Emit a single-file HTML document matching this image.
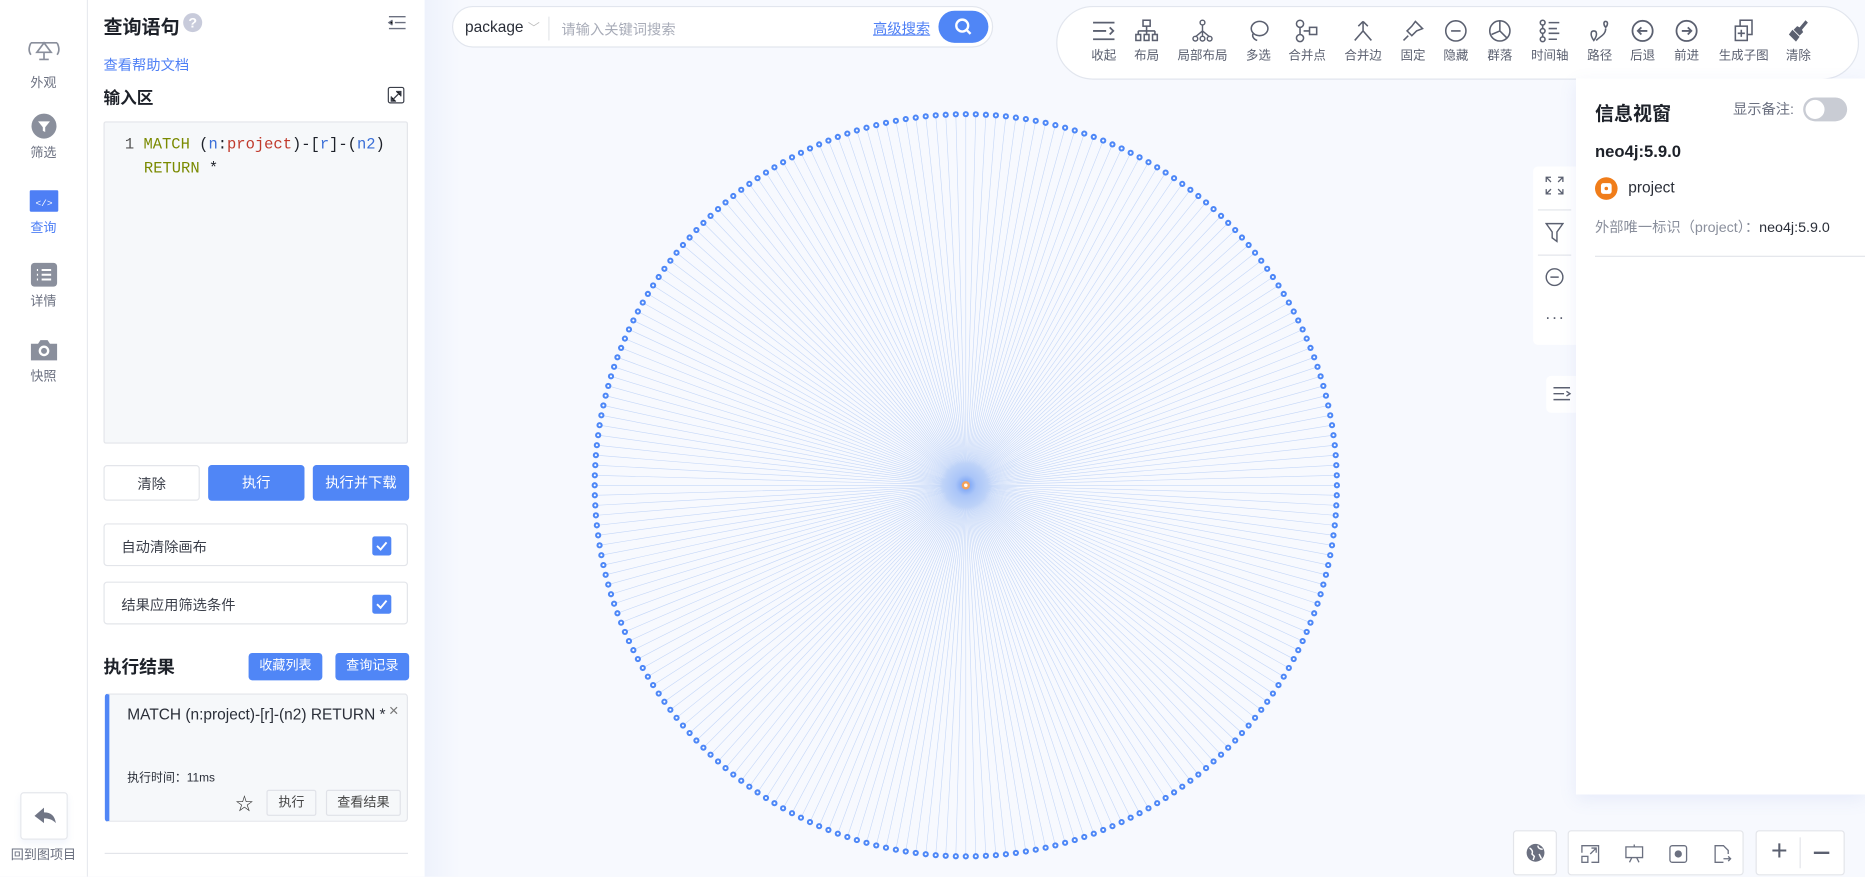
<!DOCTYPE html>
<html><head><meta charset="utf-8">
<style>
*{box-sizing:border-box;margin:0;padding:0}
body{width:1865px;height:876px;overflow:hidden;background:#f7f9fe;font-family:"Liberation Sans","Noto Sans CJK SC",sans-serif;color:#1d2129}
#w{position:absolute;left:0;top:0;width:1568px;height:737px;transform:scale(1.18941);transform-origin:0 0;background:#f7f9fe}
.a{position:absolute}
.nav{left:0;top:0;width:74px;height:737px;background:#fff;border-right:1px solid #e8eaef}
.ni{position:absolute;left:0;width:73px;text-align:center;font-size:11px;color:#6b7080}
.panel{left:74px;top:0;width:283px;height:737px;background:#fff}
.btn{position:absolute;border-radius:3px;font-size:12px;text-align:center;color:#fff;background:#5086f6}
.chk{position:absolute;left:87px;width:256px;height:36px;border:1px solid #e3e5ea;border-radius:3px;font-size:12px;color:#3b3f4a;padding:10px 0 0 14px}
.cb{position:absolute;right:13px;top:10px;width:16px;height:16px;background:#5086f6;border-radius:2px}
.tb{position:absolute;top:5px;left:888px;width:675px;height:62px;background:#fff;border:1px solid #e2e6ee;border-radius:31px}
.ti{position:absolute;top:10px;width:50px;margin-left:-25px;text-align:center;font-size:10.5px;color:#5b6070}
.ti svg{display:block;margin:0 auto 3px;width:20px;height:20px}
</style></head><body><div id="w">
<div class="a nav">
 <div class="ni" style="top:32px"><svg width="28" height="22" viewBox="0 0 28 22" fill="none" stroke="#8a8f9c" stroke-width="1.4"><path d="M3 4h22M14 4l-6 8h12zM14 12v6M10 18h8"/><path d="M3 4q-3 6 0 10M25 4q3 6 0 10"/></svg><div style="margin-top:4px">外观</div></div>
 <div class="ni" style="top:95px"><svg width="22" height="22"><circle cx="11" cy="11" r="10.5" fill="#8a8f9c"/><path d="M6 7h10l-4 5v4l-2-1v-3z" fill="#fff"/></svg><div style="margin-top:0px">筛选</div></div>
 <div class="ni" style="top:158px;color:#4e7ff5"><svg width="26" height="22"><rect x="1" y="2" width="24" height="18" rx="1" fill="#4e7ff5"/><text x="13" y="15" font-size="8" fill="#fff" text-anchor="middle" font-family="Liberation Mono">&lt;/&gt;</text></svg><div>查询</div></div>
 <div class="ni" style="top:220px"><svg width="24" height="22"><rect x="1" y="1" width="22" height="20" rx="3" fill="#8a8f9c"/><path d="M6 7h1M10 7h8M6 11h1M10 11h8M6 15h1M10 15h8" stroke="#fff" stroke-width="1.6"/></svg><div>详情</div></div>
 <div class="ni" style="top:283px"><svg width="26" height="22"><path d="M2 6h6l2-3h6l2 3h6v14H2z" fill="#8a8f9c"/><circle cx="13" cy="12" r="4.5" fill="#fff"/><circle cx="13" cy="12" r="2.5" fill="#8a8f9c"/></svg><div>快照</div></div>
 <div class="a" style="left:17px;top:666px;width:40px;height:40px;border:1px solid #e5e7ec;border-radius:3px;box-shadow:0 3px 6px rgba(80,110,200,.08)"><svg width="40" height="40"><path d="M11 19l8-7v4c6 0 9 3 10 9-3-3-6-4-10-4v4z" fill="#707585"/></svg></div>
 <div class="ni" style="top:710px;font-size:11px">回到图项目</div>
</div>
<div class="a panel">
 <div class="a" style="left:13px;top:9px;font-size:16px;font-weight:bold">查询语句</div>
 <div class="a" style="left:80px;top:11px;width:16px;height:16px;border-radius:50%;background:#c8cbdb;color:#fff;font-size:12px;text-align:center;line-height:16px;font-weight:bold">?</div>
 <svg class="a" style="left:252px;top:12px" width="16" height="14" stroke="#6b7080" stroke-width="1.2"><path d="M1 2h14M6 7h9M1 12h14M4 5l-3 2 3 2"/></svg>
 <div class="a" style="left:13px;top:46px;font-size:12px;color:#4e7ff5">查看帮助文档</div>
 <div class="a" style="left:13px;top:72px;font-size:14px;font-weight:bold">输入区</div>
 <div class="a" style="left:252px;top:73px;width:14px;height:14px;border:1.3px solid #3b3f4a;border-radius:2px"><svg width="12" height="12" stroke="#3b3f4a" stroke-width="1.1"><path d="M2 10l8-8M6 2h4v4M2 6v4h4"/></svg></div>
 <div class="a" style="left:13px;top:102px;width:256px;height:271px;background:#f6f8fa;border:1px solid #e3e5ea;border-radius:2px;font-family:'Liberation Mono',monospace;font-size:13px;line-height:20px;padding:9px 0 0 17px">
  <div><span style="color:#555">1</span> <span style="color:#7a8a00">MATCH</span> (<span style="color:#3a6fd8">n</span>:<span style="color:#c0392b">project</span>)-[<span style="color:#3a6fd8">r</span>]-(<span style="color:#3a6fd8">n2</span>)</div>
  <div style="padding-left:16px"><span style="color:#7a8a00">RETURN</span> *</div>
 </div>
</div>
<div class="btn" style="left:87px;top:391px;width:81px;height:30px;line-height:30px;background:#fff;color:#3b3f4a;border:1px solid #e3e5ea">清除</div>
<div class="btn" style="left:175px;top:391px;width:81px;height:30px;line-height:30px">执行</div>
<div class="btn" style="left:263px;top:391px;width:81px;height:30px;line-height:30px">执行并下载</div>
<div class="chk" style="top:440px">自动清除画布<div class="cb"><svg width="16" height="16"><path d="M4 8l3 3 5-6" stroke="#fff" stroke-width="1.6" fill="none"/></svg></div></div>
<div class="chk" style="top:489px">结果应用筛选条件<div class="cb"><svg width="16" height="16"><path d="M4 8l3 3 5-6" stroke="#fff" stroke-width="1.6" fill="none"/></svg></div></div>
<div class="a" style="left:87px;top:550px;font-size:15px;font-weight:bold">执行结果</div>
<div class="btn" style="left:209px;top:549px;width:62px;height:23px;line-height:23px;font-size:11px">收藏列表</div>
<div class="btn" style="left:282px;top:549px;width:62px;height:23px;line-height:23px;font-size:11px">查询记录</div>
<div class="a" style="left:88px;top:583px;width:255px;height:108px;background:#f6f8fa;border:1px solid #e3e5ea;border-left:4px solid #5086f6;border-radius:3px">
 <div class="a" style="left:15px;top:9px;font-size:13px;color:#2a2e38">MATCH (n:project)-[r]-(n2) RETURN *</div>
 <div class="a" style="left:235px;top:5px;font-size:14px;color:#777">×</div>
 <div class="a" style="left:15px;top:61px;font-size:10px;color:#2a2e38">执行时间：11ms</div>
 <div class="a" style="left:106px;top:81px;font-size:15px;color:#333">☆</div>
 <div class="a" style="left:132px;top:80px;width:42px;height:22px;border:1px solid #e0e2e8;border-radius:2px;font-size:11px;text-align:center;line-height:20px;color:#444">执行</div>
 <div class="a" style="left:182px;top:80px;width:63px;height:22px;border:1px solid #e0e2e8;border-radius:2px;font-size:11px;text-align:center;line-height:20px;color:#444">查看结果</div>
</div>
<div class="a" style="left:88px;top:717px;width:255px;height:1px;background:#e3e5ea"></div>
<div class="a" style="left:357px;top:0;width:30px;height:737px;background:linear-gradient(90deg,#eef2fc,#f7f9fe)"></div>

<svg id="g" class="a" style="left:357px;top:0" width="968" height="737"></svg>

<div class="a" style="left:380px;top:5px;width:455px;height:35px;background:#fff;border:1px solid #e2e6ee;border-radius:18px">
 <div class="a" style="left:10px;top:9px;font-size:13px;color:#2a2e38">package <span style="color:#bbb;font-size:10px">﹀</span></div>
 <div class="a" style="left:80px;top:8px;width:1px;height:20px;background:#e3e5ea"></div>
 <div class="a" style="left:91px;top:10px;font-size:12px;color:#a8acb8">请输入关键词搜索</div>
 <div class="a" style="left:353px;top:9px;font-size:12px;color:#4e7ff5;text-decoration:underline">高级搜索</div>
 <div class="a" style="left:408px;top:3px;width:42px;height:27px;background:#5086f6;border-radius:14px"><svg width="42" height="27" stroke="#fff" stroke-width="2" fill="none"><circle cx="20" cy="12.5" r="5"/><path d="M24 16.5l3 3"/></svg></div>
</div>

<div class="tb">
 <div class="ti" style="left:39px"><svg viewBox="0 0 20 20" stroke="#5b6070" fill="none" stroke-width="1.5"><path d="M1 3h18M1 10h11M1 17h18M15 7l3 3-3 3"/></svg>收起</div>
 <div class="ti" style="left:75px"><svg viewBox="0 0 20 20" stroke="#5b6070" fill="none" stroke-width="1.3"><rect x="7" y="1" width="6" height="5"/><path d="M10 6v4M3 10h14M3 10v3M10 10v3M17 10v3"/><rect x="1" y="13" width="4" height="5"/><rect x="8" y="13" width="4" height="5"/><rect x="15" y="13" width="4" height="5"/></svg>布局</div>
 <div class="ti" style="left:122px"><svg viewBox="0 0 20 20" stroke="#5b6070" fill="none" stroke-width="1.2"><circle cx="10" cy="3" r="2"/><path d="M10 5v5M10 10l-6 5M10 10l6 5M10 10v5"/><circle cx="4" cy="16.5" r="2"/><circle cx="10" cy="16.5" r="2"/><circle cx="16" cy="16.5" r="2"/></svg>局部布局</div>
 <div class="ti" style="left:169px"><svg viewBox="0 0 20 20" stroke="#5b6070" fill="none" stroke-width="1.3"><ellipse cx="11" cy="8" rx="7" ry="6"/><path d="M6 12c-2 2 0 5 3 6"/></svg>多选</div>
 <div class="ti" style="left:210px"><svg viewBox="0 0 20 20" stroke="#5b6070" fill="none" stroke-width="1.3"><circle cx="4" cy="4" r="3"/><circle cx="4" cy="16" r="3"/><rect x="12" y="7" width="6" height="6"/><path d="M7 10h5M4 7v6"/></svg>合并点</div>
 <div class="ti" style="left:257px"><svg viewBox="0 0 20 20" stroke="#5b6070" fill="none" stroke-width="1.3"><path d="M10 2v8M10 2l-4 4M10 2l4 4M10 10l-7 8M10 10l7 8"/></svg>合并边</div>
 <div class="ti" style="left:299px"><svg viewBox="0 0 20 20" stroke="#5b6070" fill="none" stroke-width="1.3"><path d="M12 2l6 6-5 2-4 4-4-4 4-4zM6 14l-4 4"/></svg>固定</div>
 <div class="ti" style="left:335px"><svg viewBox="0 0 20 20" stroke="#5b6070" fill="none" stroke-width="1.3"><circle cx="10" cy="10" r="8.5"/><path d="M6 10h8"/></svg>隐藏</div>
 <div class="ti" style="left:372px"><svg viewBox="0 0 20 20" stroke="#5b6070" fill="none" stroke-width="1.3"><circle cx="10" cy="10" r="8.5"/><path d="M10 1.5v8.5l6 6M10 10l-7 3"/></svg>群落</div>
 <div class="ti" style="left:414px"><svg viewBox="0 0 20 20" stroke="#5b6070" fill="none" stroke-width="1.3"><circle cx="4" cy="3" r="2"/><circle cx="4" cy="10" r="2"/><circle cx="4" cy="17" r="2"/><path d="M4 5v3M4 12v3M9 3h9M9 8h7M9 12h9M9 17h7"/></svg>时间轴</div>
 <div class="ti" style="left:456px"><svg viewBox="0 0 20 20" stroke="#5b6070" fill="none" stroke-width="1.3"><path d="M5 10c-3 0-3 4 0 8 3-4 3-8 0-8zM15 2c-2 0-2 3 0 5 2-2 2-5 0-5zM15 8c0 5-4 6-8 10"/></svg>路径</div>
 <div class="ti" style="left:492px"><svg viewBox="0 0 20 20" stroke="#5b6070" fill="none" stroke-width="1.5"><circle cx="10" cy="10" r="8.5"/><path d="M14 10H6M9 7l-3 3 3 3"/></svg>后退</div>
 <div class="ti" style="left:529px"><svg viewBox="0 0 20 20" stroke="#5b6070" fill="none" stroke-width="1.5"><circle cx="10" cy="10" r="8.5"/><path d="M6 10h8M11 7l3 3-3 3"/></svg>前进</div>
 <div class="ti" style="left:577px"><svg viewBox="0 0 20 20" stroke="#5b6070" fill="none" stroke-width="1.3"><rect x="7" y="1" width="10" height="12"/><rect x="3" y="6" width="10" height="12" fill="#fff"/><path d="M8 9v6M5 12h6"/></svg>生成子图</div>
 <div class="ti" style="left:623px"><svg viewBox="0 0 20 20"><path d="M16 1l2 2-5 6 1 2-3 3-5-5 3-3 2 1z" fill="#5b6070"/><path d="M5 9l6 6-3 4-6-6z" fill="#5b6070"/></svg>清除</div>
</div>

<div class="a" style="left:1289px;top:140px;width:36px;height:150px;background:#fff;border-radius:4px 0 0 4px">
 <svg class="a" style="left:10px;top:8px" width="16" height="16" stroke="#5b6070" fill="none" stroke-width="1.1"><path d="M1 5V1h4M1 1l4 4M15 5V1h-4M15 1l-4 4M1 11v4h4M1 15l4-4M15 11v4h-4M15 15l-4-4"/></svg>
 <div class="a" style="left:4px;top:36px;width:28px;height:1px;background:#e3e5ea"></div>
 <svg class="a" style="left:10px;top:46px" width="16" height="18" stroke="#5b6070" fill="none" stroke-width="1.2"><path d="M1 2h14l-5 7v8l-4-3V9z"/></svg>
 <div class="a" style="left:4px;top:74px;width:28px;height:1px;background:#e3e5ea"></div>
 <svg class="a" style="left:10px;top:85px" width="16" height="16" stroke="#5b6070" fill="none" stroke-width="1.2"><circle cx="8" cy="8" r="7"/><path d="M4.5 8h7"/></svg>
 <div class="a" style="left:10px;top:118px;font-size:14px;color:#5b6070;letter-spacing:1px">···</div>
</div>
<div class="a" style="left:1300px;top:316px;width:25px;height:31px;background:#fff;border-radius:4px 0 0 4px"><svg class="a" style="left:6px;top:9px" width="15" height="13" stroke="#5b6070" fill="none" stroke-width="1.2"><path d="M0 1h14M0 6h9M0 11h14M11 4l3 2-3 2"/></svg></div>

<div class="a" style="left:1325px;top:66px;width:243px;height:602px;background:#fff;box-shadow:0 4px 14px rgba(90,120,220,.1)">
 <div class="a" style="left:16px;top:16px;font-size:16px;font-weight:bold;color:#1d2129">信息视窗</div>
 <div class="a" style="left:132px;top:17px;font-size:12px;color:#6b7080">显示备注:</div>
 <div class="a" style="left:191px;top:16px;width:37px;height:20px;border-radius:10px;background:#c9ccd4"><div class="a" style="left:2px;top:2px;width:16px;height:16px;border-radius:50%;background:#fff"></div></div>
 <div class="a" style="left:16px;top:53px;font-size:14px;font-weight:bold">neo4j:5.9.0</div>
 <div class="a" style="left:16px;top:83px;width:19px;height:19px;border-radius:50%;background:#f07d1a"><div class="a" style="left:5px;top:5px;width:9px;height:9px;border-radius:2px;background:#fff"></div><div class="a" style="left:8px;top:8px;width:3px;height:3px;border-radius:50%;background:#f07d1a"></div></div>
 <div class="a" style="left:44px;top:84px;font-size:13px;color:#2a2e38">project</div>
 <div class="a" style="left:16px;top:116px;font-size:12px;color:#8a8f9c">外部唯一标识（project）：<span style="color:#2a2e38">neo4j:5.9.0</span></div>
 <div class="a" style="left:16px;top:149px;width:227px;height:1px;background:#e3e5ea"></div>
</div>

<div class="a" style="left:1272px;top:698px;width:37px;height:38px;background:#fff;border:1px solid #e3e5ea;border-radius:3px"><svg class="a" style="left:10px;top:10px" width="16" height="16"><circle cx="8" cy="8" r="7.5" fill="#6b7080"/><path d="M3 4c2 1 3 3 2 5l2 2-1 3M10 2c0 2 2 3 4 3M11 9l2 4" stroke="#fff" stroke-width="1.2" fill="none"/></svg></div>
<div class="a" style="left:1318px;top:698px;width:148px;height:38px;background:#fff;border:1px solid #e3e5ea;border-radius:3px">
 <svg class="a" style="left:10px;top:11px" width="16" height="16" stroke="#6b7080" fill="none" stroke-width="1.1"><path d="M1 7V1h14v14H9"/><rect x="1" y="10" width="5" height="5"/><path d="M8 8l5-5M9 3h4v4"/></svg>
 <svg class="a" style="left:47px;top:11px" width="16" height="16" stroke="#6b7080" fill="none" stroke-width="1.1"><path d="M8 0v2M1 2h14v9H1zM4 15l2-4M12 15l-2-4"/></svg>
 <svg class="a" style="left:84px;top:11px" width="16" height="16" stroke="#6b7080" fill="none" stroke-width="1.1"><rect x="1" y="1" width="14" height="14" rx="2"/><circle cx="8" cy="8" r="2.5" fill="#6b7080"/></svg>
 <svg class="a" style="left:121px;top:11px" width="16" height="16" stroke="#6b7080" fill="none" stroke-width="1.1"><path d="M9 15H2V1h7l4 4v3M9 12h6M13 10l2 2-2 2"/></svg>
</div>
<div class="a" style="left:1476px;top:698px;width:75px;height:38px;background:#fff;border:1px solid #e3e5ea;border-radius:3px">
 <div class="a" style="left:12px;top:3px;font-size:24px;color:#5b6070">+</div>
 <div class="a" style="left:36px;top:5px;width:1px;height:26px;background:#e3e5ea"></div>
 <div class="a" style="left:48px;top:17px;width:13px;height:2px;background:#5b6070"></div>
</div>
</div>
<script>
(function(){var s=document.getElementById('g'),cx=455,cy=408,R=312,N=232,h='';
h+='<defs><radialGradient id="rg"><stop offset="0" stop-color="#4a82f5" stop-opacity=".75"/><stop offset=".4" stop-color="#5b8ff6" stop-opacity=".25"/><stop offset="1" stop-color="#5b8ff6" stop-opacity="0"/></radialGradient></defs>';
var l='',c='';
for(var i=0;i<N;i++){var a=i/N*2*Math.PI,x=cx+R*Math.cos(a),y=cy+R*Math.sin(a);
l+='M'+cx+' '+cy+'L'+x.toFixed(1)+' '+y.toFixed(1);
c+='<circle cx="'+x.toFixed(1)+'" cy="'+y.toFixed(1)+'" r="2.6" fill="#4d87f7"/><circle cx="'+x.toFixed(1)+'" cy="'+y.toFixed(1)+'" r="0.9" fill="#fff"/>';}
h+='<path d="'+l+'" stroke="#b3cbf6" stroke-width="0.5" fill="none" opacity="0.75"/>';
h+='<circle cx="'+cx+'" cy="'+cy+'" r="22" fill="url(#rg)"/>';
h+=c+'<circle cx="'+cx+'" cy="'+cy+'" r="3.5" fill="#f3a15a"/><circle cx="'+cx+'" cy="'+cy+'" r="1.5" fill="#fff"/>';
s.innerHTML=h;})();
</script>
</body></html>
